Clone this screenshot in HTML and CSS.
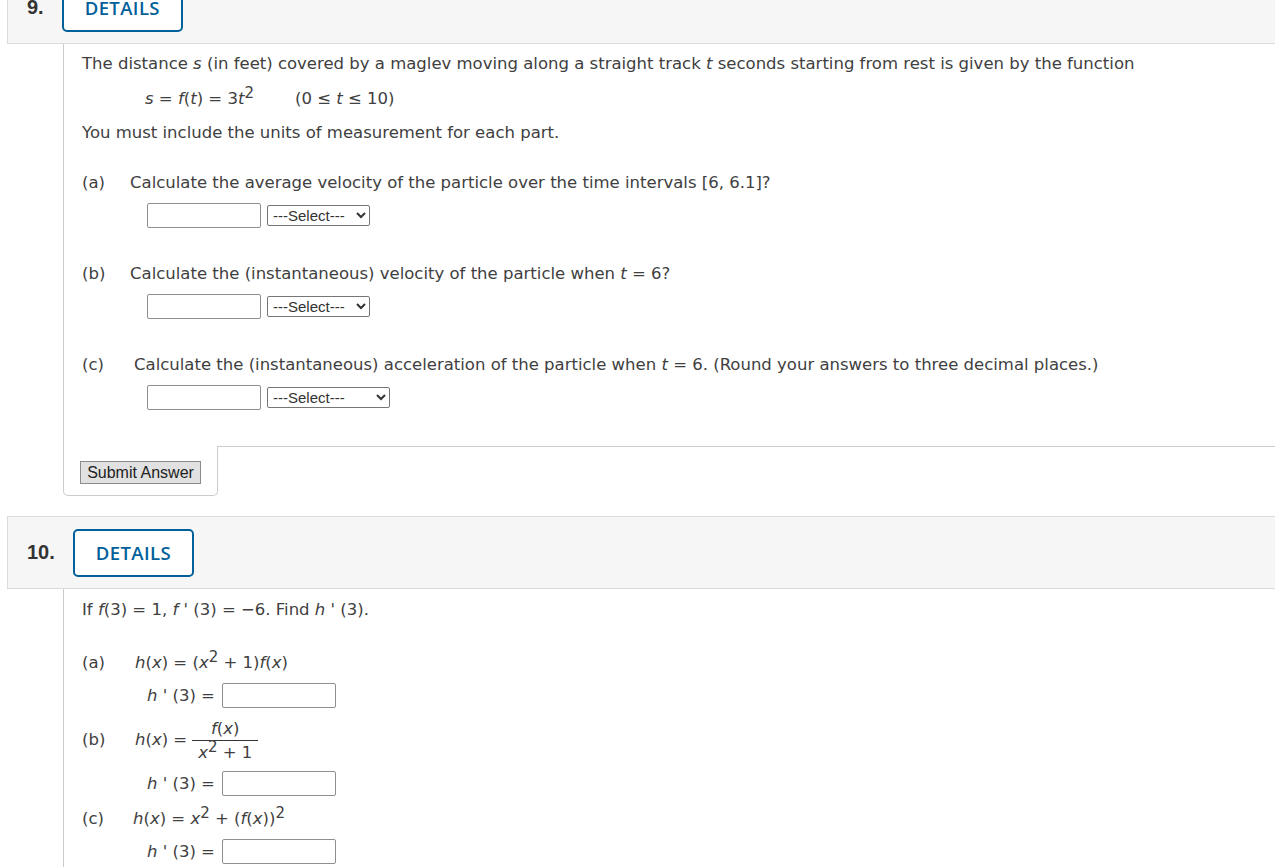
FILE: index.html
```html
<!DOCTYPE html>
<html lang="en">
<head>
    <meta charset="UTF-8">
    <meta name="viewport" content="width=device-width, initial-scale=1.0">
    <title>Assignment</title>
    <link rel="stylesheet" href="styles.css">
</head>
<body>
    <div class="page">

        <div class="question first">
            <div class="q-header">
                <span class="q-num">9.</span>
                <button type="button" class="details">DETAILS</button>
            </div>
            <div class="q-body">
                <p class="line">The distance <i>s</i> (in feet) covered by a maglev moving along a straight track <i>t</i> seconds starting from rest is given by the function</p>
                <p class="formula"><i>s</i> = <i>f</i>(<i>t</i>) = 3<i>t</i><sup>2</sup><span class="range">(0 &le; <i>t</i> &le; 10)</span></p>
                <p class="line">You must include the units of measurement for each part.</p>

                <div class="part">
                    <span class="part-label">(a)</span>
                    <span class="part-text">Calculate the average velocity of the particle over the time intervals [6, 6.1]?</span>
                </div>
                <div class="answer-row">
                    <input type="text" class="answer">
                    <select class="units">
                        <option>---Select---</option>
                    </select>
                </div>

                <div class="part">
                    <span class="part-label">(b)</span>
                    <span class="part-text">Calculate the (instantaneous) velocity of the particle when <i>t</i> = 6?</span>
                </div>
                <div class="answer-row">
                    <input type="text" class="answer">
                    <select class="units">
                        <option>---Select---</option>
                    </select>
                </div>

                <div class="part">
                    <span class="part-label">(c)</span>
                    <span class="part-text wide">Calculate the (instantaneous) acceleration of the particle when <i>t</i> = 6. (Round your answers to three decimal places.)</span>
                </div>
                <div class="answer-row">
                    <input type="text" class="answer">
                    <select class="units units-wide">
                        <option>---Select---</option>
                    </select>
                </div>
            </div>
            <div class="submit-tab">
                <button type="button" class="submit">Submit Answer</button>
            </div>
        </div>

        <div class="question">
            <div class="q-header">
                <span class="q-num">10.</span>
                <button type="button" class="details">DETAILS</button>
            </div>
            <div class="q-body open">
                <p class="line">If <i>f</i>(3) = 1, <i>f</i> ' (3) = &minus;6. Find <i>h</i> ' (3).</p>

                <div class="part math">
                    <span class="part-label">(a)</span>
                    <span class="part-text"><i>h</i>(<i>x</i>) = (<i>x</i><sup>2</sup> + 1)<i>f</i>(<i>x</i>)</span>
                </div>
                <div class="deriv-row">
                    <span class="deriv"><i>h</i> ' (3) =</span>
                    <input type="text" class="answer">
                </div>

                <div class="part math frac-part">
                    <span class="part-label">(b)</span>
                    <span class="part-text"><i>h</i>(<i>x</i>) =</span>
                    <span class="frac">
                        <span class="num"><i>f</i>(<i>x</i>)</span>
                        <span class="den"><i>x</i><sup>2</sup> + 1</span>
                    </span>
                </div>
                <div class="deriv-row">
                    <span class="deriv"><i>h</i> ' (3) =</span>
                    <input type="text" class="answer">
                </div>

                <div class="part math last">
                    <span class="part-label">(c)</span>
                    <span class="part-text tight"><i>h</i>(<i>x</i>) = <i>x</i><sup>2</sup> + (<i>f</i>(<i>x</i>))<sup>2</sup></span>
                </div>
                <div class="deriv-row">
                    <span class="deriv"><i>h</i> ' (3) =</span>
                    <input type="text" class="answer">
                </div>
            </div>
        </div>

    </div>
</body>
</html>
```

FILE: styles.css
```css
body {
    margin: 0;
    font-family: "DejaVu Sans", Verdana, sans-serif;
    font-size: 16.5px;
    color: #404040;
    background-color: #fff;
    overflow: hidden;
}

.page {
    padding-left: 7px;
}

.question {
    margin-bottom: 20px;
}

.question.first {
    margin-top: -29px;
}

/* grey header bar with number and details button */
.q-header {
    display: flex;
    align-items: center;
    height: 71px;
    background-color: #f6f6f6;
    border: 1px solid #dcdcdc;
    border-right: none;
    padding-left: 19px;
}

.q-num {
    font-family: "Liberation Sans", Arial, sans-serif;
    font-weight: bold;
    font-size: 20px;
    color: #333;
    margin-right: 18px;
}

.details {
    height: 48px;
    padding: 0 21px;
    background-color: #fff;
    border: 2px solid #00619a;
    border-radius: 5px;
    color: #00619a;
    font-family: "Open Sans", sans-serif;
    font-weight: 600;
    font-size: 18.5px;
    letter-spacing: 0.4px;
}

.q-body {
    margin-left: 56px;
    border-left: 1px solid #cccccc;
    border-bottom: 1px solid #cccccc;
    padding: 10px 0 36px 18px;
}

.q-body.open {
    border-bottom: none;
    padding-top: 11px;
    padding-bottom: 40px;
}

p {
    margin: 0;
}

.line {
    line-height: 20px;
}

.formula {
    line-height: 20px;
    margin: 15px 0 14px 63px;
}

i {
    font-style: italic;
}

sup {
    font-size: 15px;
    line-height: 0;
    vertical-align: 6px;
}

.range {
    margin-left: 41px;
}

.part {
    display: flex;
    align-items: center;
    line-height: 20px;
    margin-top: 36px;
}

.q-body > .line + .part {
    margin-top: 30px;
}

.part-label {
    width: 48px;
    flex-shrink: 0;
}

.part-text.wide {
    padding-left: 4px;
}

.answer-row {
    display: flex;
    align-items: center;
    gap: 6px;
    margin: 10px 0 0 65px;
}

.answer {
    width: 114px;
    height: 25px;
    box-sizing: border-box;
    border: 1px solid #8f8f8f;
    border-radius: 2px;
    padding: 2px 4px;
    font-size: 14px;
}

.units {
    height: 21px;
    width: 103px;
    box-sizing: border-box;
    border: 1px solid #767676;
    border-radius: 2px;
    font-family: "Liberation Sans", Arial, sans-serif;
    font-size: 15px;
    color: #333;
    background-color: #fff;
    padding: 0 1px;
}

.units-wide {
    width: 123px;
}

/* tab holding the submit button */
.submit-tab {
    margin-left: 56px;
    margin-top: -1px;
    width: 155px;
    height: 50px;
    display: flex;
    align-items: flex-start;
    padding: 15px 0 0 16px;
    box-sizing: border-box;
    background-color: #fff;
    border: 1px solid #cccccc;
    border-top: none;
    border-radius: 0 0 5px 5px;
}

.submit {
    font-family: "Liberation Sans", Arial, sans-serif;
    font-size: 16px;
    color: #222;
    height: 23px;
    width: 121px;
    padding: 0 2px;
    background-color: #e1e1e1;
    border: 1px solid #8c8c8c;
    border-radius: 0;
    white-space: nowrap;
}

/* second question: math rows */
.q-body.open .line + .part {
    margin-top: 33px;
}

.part.math {
    margin-top: 11px;
}

.part.math.last {
    margin-top: 13px;
}

.part.math .part-label {
    width: 53px;
}

.part-text.tight {
    margin-left: -2px;
}

.deriv-row {
    display: flex;
    align-items: center;
    margin: 10px 0 0 65px;
}

.deriv {
    width: 75px;
}

.frac-part {
    height: 42px;
}

.frac {
    display: inline-flex;
    flex-direction: column;
    align-items: center;
    margin-left: 5px;
    line-height: 19px;
}

.num {
    padding: 0 6px 2px;
    border-bottom: 1px solid #333;
    width: 100%;
    text-align: center;
    box-sizing: border-box;
}

.den {
    padding: 2px 6px 0;
}
```
